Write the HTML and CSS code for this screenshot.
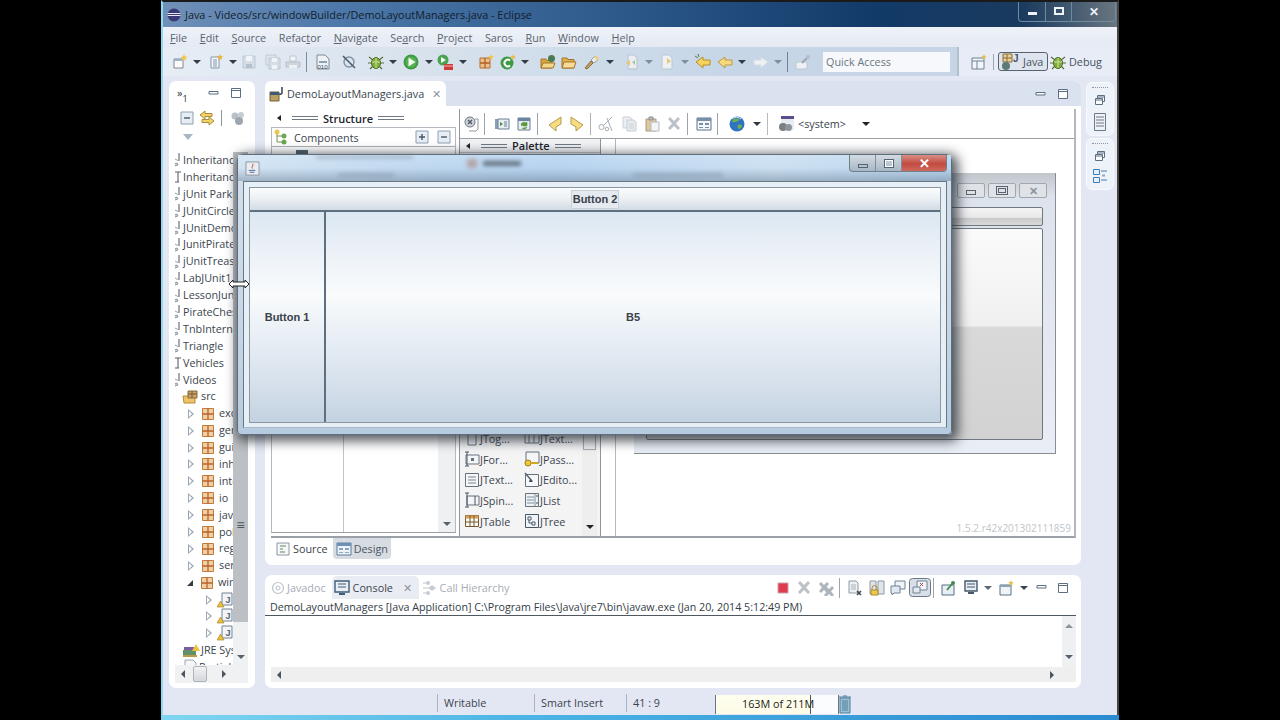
FILE: index.html
```html
<!DOCTYPE html>
<html lang="en">
<head>
    <meta charset="UTF-8">
    <title>Java - Videos/src/windowBuilder/DemoLayoutManagers.java - Eclipse</title>
    <link rel="stylesheet" href="styles.css">
</head>
<body>
    <svg class="defs" width="0" height="0">
        <defs>
            <symbol id="i-new" viewBox="0 0 16 16"><path d="M2 5h9v9H2z" fill="#fdfdf6" stroke="#7d8a99"/><path d="M2 5h9v2H2z" fill="#9fb4cc"/><path d="M12 0l1 2.5 2.500.5-2 1.500.5 2.500-2-1.500-2 1.500.5-2.500-2-1.500 2.500-.5z" fill="#f2c644"/></symbol>
            <symbol id="i-new2" viewBox="0 0 16 16"><path d="M3 3h8v11H3z" fill="#f6f8fb" stroke="#8495a8"/><path d="M5 6h4M5 8h4M5 10h4M5 12h4" stroke="#7c95ad"/><path d="M12 0l1 2 2 .5-1.500 1.500.5 2-2-1-2 1 .5-2L9 2.500l2-.5z" fill="#e2b83e"/></symbol>
            <symbol id="i-save" viewBox="0 0 16 16"><path d="M2 2h12v12H2z" fill="#d5dde6" stroke="#bcc8d4"/><path d="M5 2h6v5H5z" fill="#f2f5f8"/><path d="M5 10h6v4H5z" fill="#b3c0cd"/></symbol>
            <symbol id="i-saveall" viewBox="0 0 16 16"><path d="M1 1h10v10H1z" fill="#dfe5ec" stroke="#bec9d4"/><path d="M4 4h11v11H4z" fill="#d5dde6" stroke="#bcc8d4"/><path d="M7 4h5v4H7zM7 11h5v4H7z" fill="#f1f4f7"/></symbol>
            <symbol id="i-print" viewBox="0 0 16 16"><path d="M5 2h6v5H5z" fill="#f2f4f7" stroke="#bcc6d0"/><path d="M1 8h14v5H1z" fill="#cfd6de" stroke="#b6c0ca"/><path d="M4 11h8v3H4z" fill="#eef1f4"/></symbol>
            <symbol id="i-bin" viewBox="0 0 16 16"><path d="M2 1h8l4 4v10H2z" fill="#eef1f5" stroke="#7e8a96"/><path d="M4 7h8v2H4z" fill="#8ea2b6"/><text x="2.500" y="14.500" font-family="Liberation Sans" font-size="6" fill="#3e4a55">010</text></symbol>
            <symbol id="i-skip" viewBox="0 0 16 16"><path d="M3 8a5 5 0 1 0 10 0a5 5 0 1 0-10 0" fill="none" stroke="#7e90a2" stroke-width="1.400"/><path d="M2 2l12 12" stroke="#4a5c6e" stroke-width="1.600"/></symbol>
            <symbol id="i-debug" viewBox="0 0 16 16"><path d="M1 3l4 3M15 3l-4 3M0 9h4M16 9h-4M2 15l3-3M14 15l-3-3" stroke="#56683a" stroke-width="1.100"/><ellipse cx="8" cy="9" rx="4.500" ry="5.500" fill="#7fae3c" stroke="#4a6c24"/><path d="M8 4v10M4 8h8" stroke="#d0e39a"/></symbol>
            <symbol id="i-run" viewBox="0 0 16 16"><circle cx="8" cy="8" r="7.500" fill="#3f9a46"/><circle cx="8" cy="8" r="5.500" fill="#55b34f"/><path d="M5.500 3.500l7 4.500-7 4.500z" fill="#f4fbf2"/></symbol>
            <symbol id="i-ext" viewBox="0 0 16 16"><circle cx="6" cy="6" r="5.500" fill="#4aa350"/><path d="M4 3l5 3-5 3z" fill="#f4fbf2"/><path d="M7 10h9v6H7z" fill="#cc3c3a"/><path d="M7 12h9" stroke="#f2b0ae"/></symbol>
            <symbol id="i-pkg" viewBox="0 0 16 16"><path d="M2 4h10v10H2z" fill="#e9c08f" stroke="#b86f2c"/><path d="M7 4v10M2 9h10" stroke="#b45f22" stroke-width="1.300"/><path d="M13 0l.8 2 2 .5-1.600 1.200.4 2-1.600-1-1.600 1 .4-2L10.200 2.500l2-.5z" fill="#f2c644"/></symbol>
            <symbol id="i-class" viewBox="0 0 16 16"><circle cx="7" cy="9" r="6.500" fill="#3f9a46"/><path d="M10 6.500A3.300 3.300 0 1 0 10 11.500" fill="none" stroke="#fff" stroke-width="2"/><path d="M13 0l.8 2 2 .5-1.600 1.200.4 2-1.600-1-1.600 1 .4-2L10.200 2.500l2-.5z" fill="#e6c04a"/></symbol>
            <symbol id="i-open" viewBox="0 0 16 16"><path d="M1 5h5l1 1.500h5V14H1z" fill="#d8a53e" stroke="#a4762a"/><path d="M1 14l2-5h12l-2 5z" fill="#f4d68a" stroke="#a4762a"/><circle cx="11.500" cy="4.500" r="3.500" fill="#4c7a52"/></symbol>
            <symbol id="i-open2" viewBox="0 0 16 16"><path d="M1 4h5l1 1.500h6V14H1z" fill="#dcae4e" stroke="#a4762a"/><path d="M1 14l2-6h12l-2 6z" fill="#f6dc98" stroke="#a4762a"/></symbol>
            <symbol id="i-torch" viewBox="0 0 16 16"><path d="M1 14l2 1 6-6-2-2z" fill="#c89a5e" stroke="#8c6a3e"/><path d="M7 6l3 3 4-3-3-4z" fill="#e6e8ea" stroke="#98a2ac"/><path d="M11 2l3 4" stroke="#f3cd5e" stroke-width="2"/></symbol>
            <symbol id="i-nextann" viewBox="0 0 16 16"><path d="M4 1h6l3 3v11H4z" fill="#eaeef2" stroke="#b8c3ce"/><path d="M2 9l4-3v6z" fill="#e4c878"/><path d="M8 8l3-2v5z" fill="#a8c89a"/></symbol>
            <symbol id="i-prevann" viewBox="0 0 16 16"><path d="M3 1h7l3 3v11H3z" fill="#eef1f4" stroke="#bcc6d0"/><path d="M12 7l-4-3v6z" fill="#e4c878"/></symbol>
            <symbol id="i-backedit" viewBox="0 0 16 16"><path d="M1 8l7-5v3h7v5H8v3z" fill="#f6d35e" stroke="#b48e2a"/><path d="M0 2l3 2M3 0l1 3" stroke="#5a7a3a"/></symbol>
            <symbol id="i-back" viewBox="0 0 16 16"><path d="M1 8l7-5v3h7v5H8v3z" fill="#f6d97c" stroke="#b89a48"/></symbol>
            <symbol id="i-fwd" viewBox="0 0 16 16"><path d="M15 8L8 3v3H1v5h7v3z" fill="#eef1f4" stroke="#d2dae2"/></symbol>
            <symbol id="i-pin" viewBox="0 0 16 16"><path d="M1 8h11v7H1z" fill="#eef1f4" stroke="#bcc6d0"/><path d="M7 9l6-6" stroke="#9aa6b2" stroke-width="2"/><circle cx="13" cy="3" r="2" fill="#b6bfc8"/></symbol>
            <symbol id="i-arrow" viewBox="0 0 8 4"><path d="M0 0h8L4 4z"/></symbol>
            <symbol id="i-minview" viewBox="0 0 12 12"><path d="M1 4.500h9v2.500H1z" fill="#fff" stroke="#5d6f82"/></symbol>
            <symbol id="i-maxview" viewBox="0 0 12 12"><path d="M1.500 1.500h9v9h-9z" fill="#fff" stroke="#5d6f82"/><path d="M1.500 3.500h9" stroke="#5d6f82"/></symbol>
            <symbol id="i-collapse" viewBox="0 0 16 16"><path d="M2 2h12v12H2z" fill="#e7edf4" stroke="#8ea0b2"/><path d="M5 8h6" stroke="#46586a" stroke-width="1.400"/></symbol>
            <symbol id="i-expand" viewBox="0 0 16 16"><path d="M2 2h12v12H2z" fill="#e7edf4" stroke="#8ea0b2"/><path d="M5 8h6M8 5v6" stroke="#46586a" stroke-width="1.400"/></symbol>
            <symbol id="i-link" viewBox="0 0 16 16"><path d="M1 5l5-4v2.500h7V6.500H6V9z" fill="#f2d26a" stroke="#a88c3a"/><path d="M15 11l-5-4v2.500H3v3h7V15z" fill="#f2d26a" stroke="#a88c3a"/></symbol>
            <symbol id="i-filter" viewBox="0 0 16 16"><circle cx="5" cy="6" r="3.500" fill="#b8bfc6"/><circle cx="11" cy="5" r="3" fill="#c6ccd2"/><circle cx="9" cy="11" r="4" fill="#9ea7b0"/></symbol>
            <symbol id="i-comps" viewBox="0 0 16 16"><path d="M4 3v10h6M4 7h6" fill="none" stroke="#7c8c5c"/><circle cx="4" cy="3" r="2.500" fill="#e6c850"/><circle cx="11" cy="7" r="2.500" fill="#6aa84f"/><circle cx="11" cy="13" r="2.500" fill="#6aa84f"/></symbol>
            <symbol id="i-refactor" viewBox="0 0 16 16"><path d="M1 3h3v10H1z" fill="#8aa2b8"/><path d="M4 3h11v10H4z" fill="#e8eef4" stroke="#6a8094"/><path d="M6 6l3 2-3 2z" fill="#4f8a3c"/><path d="M10 6h3M10 8h3M10 10h3" stroke="#6a8094"/></symbol>
            <symbol id="i-sync" viewBox="0 0 16 16"><path d="M2 2h12v12H2z" fill="#e8eef4" stroke="#6a8094"/><path d="M2 2h12v3H2z" fill="#6b84a0"/><path d="M5 9a3 3 0 0 1 5-2l1-1v4H7l1-1a2 2 0 0 0-2 1zM11 11a3 3 0 0 1-5 1" fill="#5a9a3c" stroke="#5a9a3c" stroke-width=".6"/></symbol>
            <symbol id="i-test" viewBox="0 0 16 16"><circle cx="6" cy="6" r="5" fill="#cfd4d9" stroke="#6c7680"/><path d="M4 4l4 4M8 4l-4 4" stroke="#4e5862" stroke-width="1.300"/><path d="M11 3h3v10l-2 2H5" fill="none" stroke="#8e98a2"/></symbol>
            <symbol id="i-undo" viewBox="0 0 16 16"><path d="M14 1L2 9l7 6v-4l5-3z" fill="#f6dc82" stroke="#b49a4c"/></symbol>
            <symbol id="i-redo" viewBox="0 0 16 16"><path d="M2 1l12 8-7 6v-4L2 8z" fill="#f6dc82" stroke="#b49a4c"/></symbol>
            <symbol id="i-cut" viewBox="0 0 16 16"><path d="M14 1L5 10M9 2l5 13" stroke="#a8b0b8" fill="none"/><circle cx="3.500" cy="11" r="2.500" fill="none" stroke="#a8b0b8"/><circle cx="9" cy="13" r="1.800" fill="none" stroke="#a8b0b8"/></symbol>
            <symbol id="i-copy" viewBox="0 0 16 16"><path d="M2 1h7l2 2v9H2z" fill="#eceff2" stroke="#cdd3d9"/><path d="M6 4h7l2 2v9H6z" fill="#e8ebee" stroke="#c7ced4"/><path d="M8 8h5M8 10h5M8 12h5" stroke="#ccd2d8"/></symbol>
            <symbol id="i-paste" viewBox="0 0 16 16"><path d="M2 3h10v12H2z" fill="#dcc7a0" stroke="#ad9a78"/><path d="M5 1h4v3H5z" fill="#b9bec4" stroke="#8a9097"/><path d="M7 6h8v9H7z" fill="#f2f4f6" stroke="#b6bcc2"/></symbol>
            <symbol id="i-del" viewBox="0 0 16 16"><path d="M2 3l2-2 4 4 4-4 2 2-4 4.500 4 4.500-2 2-4-4-4 4-2-2 4-4.500z" fill="#bcc2c8"/></symbol>
            <symbol id="i-form" viewBox="0 0 16 16"><path d="M1 2h14v12H1z" fill="#f4f6f9" stroke="#5a7288"/><path d="M1 2h14v3H1z" fill="#7490ac"/><path d="M3 7h4v2H3zM9 7h4v2H9zM3 11h4v1H3zM9 11h4v1H9z" fill="#7490ac"/></symbol>
            <symbol id="i-globe" viewBox="0 0 16 16"><circle cx="8" cy="8" r="7.500" fill="#2f74c0"/><path d="M3 5c2-3 5-3 7-2 1 1-2 3-4 3S3 7 3 5zM9 9c2-1 4 0 4 1s-2 3-3 3-2-3-1-4z" fill="#6fb04e"/><path d="M3 3a7 7 0 0 1 9 0" stroke="#cfe4f6" fill="none"/></symbol>
            <symbol id="i-lnf" viewBox="0 0 16 16"><path d="M3 0h13v3H3z" fill="#5a4f8c"/><path d="M3 3h13v11H3z" fill="#e8ecf0"/><circle cx="5" cy="11" r="4" fill="#787e84"/><circle cx="10.500" cy="11.500" r="3.500" fill="#8e949a"/></symbol>
            <symbol id="i-tree-j" viewBox="0 0 12 16"><path d="M7 1v8" stroke="#59636d" stroke-width="1.100"/><path d="M3 7l3 1.500M2 12l3-1 1 2-3 1z" fill="#c9ccd0" stroke="#7e8892" stroke-width=".8"/></symbol>
            <symbol id="i-tree-v" viewBox="0 0 12 16"><path d="M3 3h6M6 3v10M3 13h4" stroke="#59636d" stroke-width="1.100" fill="none"/></symbol>
            <symbol id="i-tree-src" viewBox="0 0 18 16"><path d="M1 7h9l3 1v6H2z" fill="#eec36c" stroke="#b68a34"/><path d="M6 2h9v7H6z" fill="#c6a26c" stroke="#8a6a3c"/><path d="M10 2v7M6 5h9" stroke="#7a5a30"/></symbol>
            <symbol id="i-tree-pkg" viewBox="0 0 14 14"><path d="M1.500 1.500h11v11h-11z" fill="#f0cfa4" stroke="#bf7a3c"/><path d="M7 1.500v11M1.500 7h11" stroke="#b8642a" stroke-width="1.300"/></symbol>
            <symbol id="i-tree-warn" viewBox="0 0 16 16"><path d="M5 1h10v12H5z" fill="#f2f4f7" stroke="#6e8296"/><text x="8.500" y="10.500" font-family="Liberation Sans" font-size="9" font-weight="bold" fill="#55616d">J</text><path d="M3.500 9l3.500 6H0z" fill="#eec13c" stroke="#9b7c1e" stroke-width=".6"/></symbol>
            <symbol id="i-jre" viewBox="0 0 18 16"><path d="M1 8h13v5H1z" fill="#62906a"/><path d="M2 5h10v3H2z" fill="#7a5e9e"/><path d="M1 13h14v2H1z" fill="#bc9a4a"/><path d="M14 2l4 7h-8z" fill="#eec13c"/></symbol>
            <symbol id="i-doc" viewBox="0 0 16 16"><path d="M3 1h8l3 3v11H3z" fill="#f6f6f6" stroke="#9aa4ae"/></symbol>
            <symbol id="i-cursor" viewBox="0 0 22 10"><path d="M1 5l4-4v2h12V1l4 4-4 4V7H5v2z" fill="#fff" stroke="#222" stroke-width="1"/></symbol>
            <symbol id="i-src" viewBox="0 0 16 16"><path d="M2 2h12v12H2z" fill="#f5f7f9" stroke="#8d98a3"/><path d="M5 5h6M5 8h3M5 11h5" stroke="#5c8a60"/></symbol>
            <symbol id="i-des" viewBox="0 0 16 16"><path d="M1 2h14v12H1z" fill="#eef3f8" stroke="#5a7a9c"/><path d="M1 2h14v3H1z" fill="#6d90b6"/><path d="M3 7h4v2H3zM9 7h4v2H9zM3 11h4v1H3zM9 11h4v1H9z" fill="#8aa6c4"/></symbol>
            <symbol id="i-at" viewBox="0 0 14 14"><circle cx="7" cy="7" r="5.500" fill="none" stroke="#bcc4cc" stroke-width="1.200"/><circle cx="7" cy="7" r="2" fill="none" stroke="#bcc4cc"/></symbol>
            <symbol id="i-console" viewBox="0 0 16 16"><path d="M1 1h14v11H1z" fill="#e8eef4" stroke="#3f5c78" stroke-width="1.400"/><path d="M4 4h8M4 7h8" stroke="#3f5c78"/><path d="M5 14h6" stroke="#3f5c78" stroke-width="2"/></symbol>
            <symbol id="i-hier" viewBox="0 0 16 16"><path d="M2 3h4M2 8h13M2 13h4" stroke="#bcc4cc"/><circle cx="7" cy="3" r="2" fill="#c6ccd2"/><circle cx="11" cy="8" r="2.500" fill="#c6ccd2"/><circle cx="7" cy="13" r="2" fill="#c6ccd2"/></symbol>
            <symbol id="i-stop" viewBox="0 0 12 12"><path d="M1 1h10v10H1z" fill="#df3c50" stroke="#c9a0a8"/></symbol>
            <symbol id="i-delall" viewBox="0 0 16 16"><path d="M1 4l2-2 3 3 3-3 2 2-3 3.500 3 3.500-2 2-3-3-3 3-2-2 3-3.500z" fill="#aeb5bc"/><path d="M6 8l2-2 3 3 3-3 2 2-3 3.500 3 3.500-2 2-3-3-3 3-2-2 3-3.500z" fill="#aeb5bc"/></symbol>
            <symbol id="i-clear" viewBox="0 0 16 16"><path d="M2 1h7l2 2v10H2z" fill="#eef1f4" stroke="#8e98a2"/><path d="M4 5h5M4 7h5M4 9h5" stroke="#aab2ba"/><path d="M10 11l4 4M14 11l-4 4" stroke="#3e4a56" stroke-width="1.600"/></symbol>
            <symbol id="i-lock" viewBox="0 0 16 16"><path d="M1 1h6v13H1zM9 1h6v13H9z" fill="#dfe5ea" stroke="#8e98a2"/><path d="M3 11V8a2.500 2.500 0 0 1 5 0v3" fill="none" stroke="#a98a2e"/><path d="M2 10h7v5H2z" fill="#f0c84c" stroke="#a98a2e"/></symbol>
            <symbol id="i-out" viewBox="0 0 16 16"><path d="M5 1h10v8H5z" fill="#f1f4f7" stroke="#6e8296"/><path d="M1 6h9v7H4l-2 2v-2H1z" fill="#e3e9ef" stroke="#6e8296"/></symbol>
            <symbol id="i-err" viewBox="0 0 16 16"><path d="M5 1h10v9H5z" fill="#f1f4f7" stroke="#6e8296"/><path d="M8 3l3 3M11 3L8 6" stroke="#b04a4a"/><path d="M1 7h7v6H1z" fill="#e3e9ef" stroke="#6e8296"/></symbol>
            <symbol id="i-pinc" viewBox="0 0 16 16"><path d="M1 5h12v10H1z" fill="#e8eef4" stroke="#557088"/><path d="M6 10l5-6" stroke="#3f8a4c" stroke-width="1.800"/><circle cx="12" cy="3" r="2" fill="#3f8a4c"/></symbol>
            <symbol id="i-disp" viewBox="0 0 16 16"><path d="M2 1h12v10H2z" fill="#e8eef4" stroke="#43586c" stroke-width="1.400"/><path d="M4 4h8M4 7h8" stroke="#43586c"/><path d="M5 13h6" stroke="#43586c" stroke-width="2"/></symbol>
            <symbol id="i-newc" viewBox="0 0 16 16"><path d="M1 5h11v10H1z" fill="#f2f5f8" stroke="#557088"/><path d="M1 5h11v2H1z" fill="#8aa2b8"/><path d="M12 0l.8 2 2 .5-1.600 1.200.4 2-1.600-1-1.600 1 .4-2L9.200 2.500l2-.5z" fill="#e6c04a"/></symbol>
            <symbol id="i-restore" viewBox="0 0 12 12"><path d="M3.500 1.500h7v6h-7z" fill="#fff" stroke="#5d6f82"/><path d="M1.500 4.500h7v6h-7z" fill="#fff" stroke="#5d6f82"/><path d="M1.500 6h7M3.500 3h7" stroke="#5d6f82"/></symbol>
            <symbol id="i-list" viewBox="0 0 14 20"><path d="M1.500 1.500h11v17h-11z" fill="#eff2f5" stroke="#6a7a8a"/><path d="M3 5h8M3 8h8M3 11h8M3 14h8" stroke="#6a7a8a"/></symbol>
            <symbol id="i-outline" viewBox="0 0 16 16"><path d="M1.500 1.500h6v5h-6zM1.500 9.500h6v5h-6z" fill="#e8f1fa" stroke="#3e7cb4"/><path d="M9 3h6M9 12h6" stroke="#3e7cb4"/><path d="M10 7.500h3" stroke="#9aa6b2" stroke-width="2"/></symbol>
            <symbol id="i-gc" viewBox="0 0 14 20"><path d="M2 4h10v15H2z" fill="#9cc0d6" stroke="#4d7e9c"/><path d="M1 3h12M5 2h4M5 6v11M7 6v11M9 6v11" stroke="#4d7e9c"/></symbol>
            <symbol id="i-javapersp" viewBox="0 0 20 18"><path d="M3 1h9v8H3z" fill="#e6d09c" stroke="#8a6d3a"/><path d="M7 1v8M3 5h9" stroke="#8a6d3a"/><text x="13" y="9" font-family="Liberation Sans" font-size="10" font-weight="bold" fill="#48545f">J</text><circle cx="6" cy="13" r="4" fill="#5c7a78"/></symbol>
            <symbol id="i-persp" viewBox="0 0 16 16"><path d="M1 4h12v11H1z" fill="#f2f5f8" stroke="#6e8296"/><path d="M1 7h12M6 7v8" stroke="#6e8296"/><path d="M13 0l.7 1.800 1.800.4-1.400 1.200.3 1.800-1.400-.9-1.400.9.300-1.800-1.400-1.200 1.800-.4z" fill="#e6c04a"/></symbol>
            <symbol id="i-pal-tog" viewBox="0 0 16 16"><path d="M4 1h8v14H4z" fill="#f4f5f7" stroke="#66727e"/></symbol>
            <symbol id="i-pal-text" viewBox="0 0 16 16"><path d="M1 3h14v10H1z" fill="#f4f5f7" stroke="#66727e"/><path d="M5 3v10M10 3v10" stroke="#66727e"/></symbol>
            <symbol id="i-pal-for" viewBox="0 0 16 16"><path d="M2 4h13v9H2z" fill="#f4f5f7" stroke="#66727e"/><path d="M1 1h4M3 1v14M1 15h4" stroke="#4a5662" fill="none"/><path d="M7 7h3v3H7z" fill="#59738c"/></symbol>
            <symbol id="i-pal-pass" viewBox="0 0 16 16"><path d="M2 1h13v11H2z" fill="#f4f5f7" stroke="#66727e"/><circle cx="4" cy="12" r="3" fill="#f0c932" stroke="#9b7c1e"/><path d="M6 12h8" stroke="#d0a828" stroke-width="2"/></symbol>
            <symbol id="i-pal-area" viewBox="0 0 16 16"><path d="M1.500 1.500h13v13h-13z" fill="#f6f7f9" stroke="#66727e"/><path d="M4 5h8M4 8h8M4 11h8" stroke="#77838e"/></symbol>
            <symbol id="i-pal-edit" viewBox="0 0 16 16"><path d="M1.500 2.500h13v12h-13z" fill="#f6f7f9" stroke="#66727e"/><path d="M1 1l7 8" stroke="#5a6672" stroke-width="1.500"/><path d="M6 7l3 3-4 0z" fill="#3a4652"/></symbol>
            <symbol id="i-pal-spin" viewBox="0 0 16 16"><path d="M3 4h12v9H3z" fill="#f4f5f7" stroke="#66727e"/><path d="M1 1h4M3 1v14M1 15h4M11 4v9" stroke="#4a5662" fill="none"/></symbol>
            <symbol id="i-pal-list" viewBox="0 0 16 16"><path d="M1.500 1.500h13v13h-13z" fill="#eef2f6" stroke="#66727e"/><path d="M3 5h7M3 8h7M3 11h7M11 2v12" stroke="#7f90a1"/><path d="M12 4h2M12 11h2" stroke="#44515e"/></symbol>
            <symbol id="i-pal-table" viewBox="0 0 16 16"><path d="M1.500 2.500h13v11h-13z" fill="#fbfbf6" stroke="#77582e"/><path d="M1.500 2.500h13v3h-13z" fill="#d8a052"/><path d="M6 3v10M10 3v10M2 9h12" stroke="#77582e"/></symbol>
            <symbol id="i-pal-tree" viewBox="0 0 16 16"><path d="M1.500 1.500h13v13h-13z" fill="#f0f4f7" stroke="#46586a"/><path d="M4 4h3v3H4zM8 9h3v3H8z" fill="#fff" stroke="#46586a"/><path d="M5 7v3h3" stroke="#46586a" fill="none"/></symbol>
        </defs>
    </svg>

    <div class="window">
        <div class="titlebar">
            <svg class="title-icon" width="16" height="16" viewBox="0 0 16 16"><circle cx="8" cy="8" r="6.500" fill="#3a3a76"/><path d="M1.500 6.500h13M1.500 8.500h13" stroke="#e8e8f4"/></svg>
            <span class="title-text">Java - Videos/src/windowBuilder/DemoLayoutManagers.java - Eclipse</span>
            <div class="caption">
                <span class="cap-btn cap-min"><i></i></span>
                <span class="cap-btn cap-max"><i></i></span>
                <span class="cap-btn cap-close">✕</span>
            </div>
        </div>

        <div class="menubar">
            <span><u>F</u>ile</span><span><u>E</u>dit</span><span><u>S</u>ource</span><span>Refac<u>t</u>or</span><span><u>N</u>avigate</span><span>Se<u>a</u>rch</span><span><u>P</u>roject</span><span>Saros</span><span><u>R</u>un</span><span><u>W</u>indow</span><span><u>H</u>elp</span>
        </div>

        <div class="toolbar">
            <svg class="tool-strip" width="650" height="29" viewBox="161 47 650 29" fill="#333d47">
                <use href="#i-new" x="172" y="54" width="16" height="16"/>
                <use href="#i-arrow" x="193" y="60" width="8" height="4"/>
                <use href="#i-new2" x="208" y="54" width="16" height="16"/>
                <use href="#i-arrow" x="229" y="60" width="8" height="4"/>
                <use href="#i-save" x="241" y="54" width="16" height="16"/>
                <use href="#i-saveall" x="265" y="54" width="16" height="16"/>
                <use href="#i-print" x="285" y="54" width="16" height="16"/>
                <path d="M306.500 52v20" stroke="#7e8d9c"/>
                <use href="#i-bin" x="315" y="54" width="16" height="16"/>
                <use href="#i-skip" x="341" y="54" width="16" height="16"/>
                <use href="#i-debug" x="368" y="54" width="16" height="16"/>
                <use href="#i-arrow" x="389" y="60" width="8" height="4"/>
                <use href="#i-run" x="403" y="54" width="16" height="16"/>
                <use href="#i-arrow" x="425" y="60" width="8" height="4"/>
                <use href="#i-ext" x="437" y="54" width="16" height="16"/>
                <use href="#i-arrow" x="459" y="60" width="8" height="4"/>
                <use href="#i-pkg" x="478" y="54" width="16" height="16"/>
                <use href="#i-class" x="500" y="54" width="16" height="16"/>
                <use href="#i-arrow" x="521" y="60" width="8" height="4"/>
                <use href="#i-open" x="540" y="54" width="16" height="16"/>
                <use href="#i-open2" x="561" y="54" width="16" height="16"/>
                <use href="#i-torch" x="584" y="54" width="16" height="16"/>
                <use href="#i-arrow" x="606" y="60" width="8" height="4"/>
                <use href="#i-nextann" x="624" y="54" width="16" height="16"/>
                <use href="#i-arrow" x="645" y="60" width="8" height="4" fill="#7c8ea2"/>
                <use href="#i-prevann" x="659" y="54" width="16" height="16"/>
                <use href="#i-arrow" x="681" y="60" width="8" height="4" fill="#7c8ea2"/>
                <use href="#i-backedit" x="695" y="54" width="16" height="16"/>
                <use href="#i-back" x="717" y="54" width="16" height="16"/>
                <use href="#i-arrow" x="738" y="60" width="8" height="4"/>
                <use href="#i-fwd" x="753" y="54" width="16" height="16"/>
                <use href="#i-arrow" x="774" y="60" width="8" height="4" fill="#7c8ea2"/>
                <path d="M787.500 52v20" stroke="#6f8092"/>
                <use href="#i-pin" x="795" y="54" width="16" height="16"/>
            </svg>
            <div class="quick-access">Quick Access</div>
            <div class="persp">
                <svg width="16" height="16"><use href="#i-persp"/></svg>
                <span class="persp-sep"></span>
                <span class="persp-btn active"><svg width="20" height="18"><use href="#i-javapersp"/></svg>Java</span>
                <span class="persp-btn"><svg width="16" height="16"><use href="#i-debug"/></svg>Debug</span>
            </div>
        </div>

        <div class="workbench">
            <aside class="explorer">
                <div class="explorer-tools">
                    <span class="overflow">»<sub>1</sub></span>
                    <svg width="12" height="12"><use href="#i-minview"/></svg>
                    <svg width="12" height="12"><use href="#i-maxview"/></svg>
                </div>
                <div class="explorer-actions">
                    <svg width="16" height="16"><use href="#i-collapse"/></svg>
                    <svg width="16" height="16"><use href="#i-link"/></svg>
                    <span class="vsep"></span>
                    <svg width="16" height="16"><use href="#i-filter"/></svg>
                </div>
                <div class="explorer-menu"><span class="down-tri"></span></div>
                <div class="explorer-body">
                    <ul class="tree">
                        <li><svg width="12" height="16"><use href="#i-tree-j"/></svg>InheritanceDemo</li>
                        <li><svg width="12" height="16"><use href="#i-tree-v"/></svg>InheritanceTest</li>
                        <li><svg width="12" height="16"><use href="#i-tree-j"/></svg>jUnit Parking</li>
                        <li><svg width="12" height="16"><use href="#i-tree-j"/></svg>JUnitCircleTest</li>
                        <li><svg width="12" height="16"><use href="#i-tree-j"/></svg>JUnitDemo</li>
                        <li><svg width="12" height="16"><use href="#i-tree-j"/></svg>JunitPirate</li>
                        <li><svg width="12" height="16"><use href="#i-tree-j"/></svg>jUnitTreasure</li>
                        <li><svg width="12" height="16"><use href="#i-tree-j"/></svg>LabJUnit1</li>
                        <li><svg width="12" height="16"><use href="#i-tree-j"/></svg>LessonJunit</li>
                        <li><svg width="12" height="16"><use href="#i-tree-j"/></svg>PirateChest</li>
                        <li><svg width="12" height="16"><use href="#i-tree-j"/></svg>TnbInternal</li>
                        <li><svg width="12" height="16"><use href="#i-tree-j"/></svg>Triangle</li>
                        <li><svg width="12" height="16"><use href="#i-tree-v"/></svg>Vehicles</li>
                        <li><svg width="12" height="16"><use href="#i-tree-j"/></svg>Videos</li>
                        <li class="lvl-src"><svg width="18" height="16"><use href="#i-tree-src"/></svg>src</li>
                        <li class="lvl-pkg"><span class="closed"></span><svg width="14" height="14"><use href="#i-tree-pkg"/></svg>exceptions</li>
                        <li class="lvl-pkg"><span class="closed"></span><svg width="14" height="14"><use href="#i-tree-pkg"/></svg>generics</li>
                        <li class="lvl-pkg"><span class="closed"></span><svg width="14" height="14"><use href="#i-tree-pkg"/></svg>gui</li>
                        <li class="lvl-pkg"><span class="closed"></span><svg width="14" height="14"><use href="#i-tree-pkg"/></svg>inheritance</li>
                        <li class="lvl-pkg"><span class="closed"></span><svg width="14" height="14"><use href="#i-tree-pkg"/></svg>interfaces</li>
                        <li class="lvl-pkg"><span class="closed"></span><svg width="14" height="14"><use href="#i-tree-pkg"/></svg>io</li>
                        <li class="lvl-pkg"><span class="closed"></span><svg width="14" height="14"><use href="#i-tree-pkg"/></svg>javafx</li>
                        <li class="lvl-pkg"><span class="closed"></span><svg width="14" height="14"><use href="#i-tree-pkg"/></svg>polymorph</li>
                        <li class="lvl-pkg"><span class="closed"></span><svg width="14" height="14"><use href="#i-tree-pkg"/></svg>regex</li>
                        <li class="lvl-pkg"><span class="closed"></span><svg width="14" height="14"><use href="#i-tree-pkg"/></svg>serial</li>
                        <li class="lvl-pkg lvl-open"><span class="open"></span><svg width="14" height="14"><use href="#i-tree-pkg"/></svg>windowBuilder</li>
                        <li class="lvl-file"><span class="closed"></span><svg width="16" height="16"><use href="#i-tree-warn"/></svg></li>
                        <li class="lvl-file"><span class="closed"></span><svg width="16" height="16"><use href="#i-tree-warn"/></svg></li>
                        <li class="lvl-file"><span class="closed"></span><svg width="16" height="16"><use href="#i-tree-warn"/></svg></li>
                        <li class="lvl-src"><svg width="18" height="16"><use href="#i-jre"/></svg>JRE System</li>
                        <li class="lvl-src"><svg width="16" height="16"><use href="#i-doc"/></svg>Partial</li>
                    </ul>
                    <div class="tree-vscroll">
                        <div class="tree-track"><span class="grip">≡</span></div>
                        <span class="down-small"></span>
                    </div>
                </div>
                <div class="tree-hscroll"><span class="left-small"></span><span class="thumb"></span><span class="right-small"></span></div>
            </aside>

            <div class="center">
                <section class="editor">
                    <div class="editor-tabs">
                        <div class="tab">
                            <svg width="16" height="16" viewBox="0 0 16 16"><path d="M1 6h9v9H1z" fill="#b8a060" stroke="#76603a"/><path d="M1 6h9v3H1z" fill="#3e5a78"/><path d="M13 1v6a2 2 0 0 1-3 1" fill="none" stroke="#33404c" stroke-width="1.500"/></svg>
                            DemoLayoutManagers.java
                            <span class="tab-close">✕</span>
                        </div>
                        <div class="view-tools">
                            <svg width="12" height="12"><use href="#i-minview"/></svg>
                            <svg width="12" height="12"><use href="#i-maxview"/></svg>
                        </div>
                    </div>
                    <div class="designer">
                        <div class="structure">
                            <div class="flyout-head"><span class="left-tri"></span><span class="lines"></span><b>Structure</b><span class="lines"></span></div>
                            <div class="comp-box">
                                <div class="comp-head"><svg width="16" height="16"><use href="#i-comps"/></svg><span>Components</span><svg width="16" height="16"><use href="#i-expand"/></svg><svg width="16" height="16"><use href="#i-collapse"/></svg></div>
                                <div class="comp-tree"><span class="comp-root"></span></div>
                                <div class="prop-grid"><div class="prop-cols"><i></i></div><div class="prop-scroll"><span class="down-small"></span></div></div>
                            </div>
                        </div>
                        <div class="design-main">
                            <div class="design-tools">
                                <svg width="334" height="24" viewBox="0 0 334 24" fill="#2e3842">
                                    <use href="#i-test" x="3" y="4" width="16" height="16"/>
                                    <path d="M23.500 1v22" stroke="#9aa5b0"/>
                                    <use href="#i-refactor" x="33" y="4" width="16" height="16"/>
                                    <use href="#i-sync" x="55" y="4" width="16" height="16"/>
                                    <path d="M76.500 1v22" stroke="#9aa5b0"/>
                                    <use href="#i-undo" x="86" y="4" width="16" height="16"/>
                                    <use href="#i-redo" x="108" y="4" width="16" height="16"/>
                                    <path d="M129.500 1v22" stroke="#aab3bc"/>
                                    <use href="#i-cut" x="137" y="4" width="16" height="16"/>
                                    <use href="#i-copy" x="160" y="4" width="16" height="16"/>
                                    <use href="#i-paste" x="183" y="4" width="16" height="16"/>
                                    <use href="#i-del" x="205" y="4" width="16" height="16"/>
                                    <path d="M226.500 1v22" stroke="#9aa5b0"/>
                                    <use href="#i-form" x="235" y="4" width="16" height="16"/>
                                    <path d="M256.500 1v22" stroke="#9aa5b0"/>
                                    <use href="#i-globe" x="268" y="4" width="16" height="16"/>
                                    <use href="#i-arrow" x="292" y="10" width="8" height="4"/>
                                    <path d="M306.500 1v22" stroke="#b2bac2"/>
                                    <use href="#i-lnf" x="317" y="4" width="16" height="16"/>
                                </svg>
                                <span class="lnf">&lt;system&gt;</span>
                                <span class="down-solid"></span>
                            </div>
                            <div class="design-row">
                                <div class="palette">
                                    <div class="flyout-head palette-head"><span class="left-tri"></span><span class="lines"></span><b>Palette</b><span class="lines"></span></div>
                                    <div class="palette-body">
                                        <div class="palette-items">
                                            <span class="pal"><svg width="16" height="16"><use href="#i-pal-tog"/></svg>JTog...</span>
                                            <span class="pal"><svg width="16" height="16"><use href="#i-pal-text"/></svg>JText...</span>
                                            <span class="pal"><svg width="16" height="16"><use href="#i-pal-for"/></svg>JFor...</span>
                                            <span class="pal"><svg width="16" height="16"><use href="#i-pal-pass"/></svg>JPass...</span>
                                            <span class="pal"><svg width="16" height="16"><use href="#i-pal-area"/></svg>JText...</span>
                                            <span class="pal"><svg width="16" height="16"><use href="#i-pal-edit"/></svg>JEdito...</span>
                                            <span class="pal"><svg width="16" height="16"><use href="#i-pal-spin"/></svg>JSpin...</span>
                                            <span class="pal"><svg width="16" height="16"><use href="#i-pal-list"/></svg>JList</span>
                                            <span class="pal"><svg width="16" height="16"><use href="#i-pal-table"/></svg>JTable</span>
                                            <span class="pal"><svg width="16" height="16"><use href="#i-pal-tree"/></svg>JTree</span>
                                        </div>
                                        <div class="pal-scroll"><span class="pal-thumb"></span><span class="down-solid small"></span></div>
                                    </div>
                                </div>
                                <div class="canvas-gutter"></div>
                                <div class="canvas">
                                    <div class="frame">
                                        <div class="frame-title">
                                            <span class="frame-btn"><i></i></span>
                                            <span class="frame-btn square"><i></i></span>
                                            <span class="frame-btn x">✕</span>
                                        </div>
                                        <div class="frame-top"></div>
                                        <div class="frame-mid"></div>
                                    </div>
                                    <div class="version">1.5.2.r42x201302111859</div>
                                </div>
                            </div>
                        </div>
                    </div>
                    <div class="editor-foot">
                        <span class="foot-tab"><svg width="16" height="16"><use href="#i-src"/></svg>Source</span>
                        <span class="foot-tab current"><svg width="16" height="16"><use href="#i-des"/></svg>Design</span>
                    </div>
                </section>

                <section class="console">
                    <div class="console-tabs">
                        <span class="ctab dim"><svg width="14" height="14"><use href="#i-at"/></svg>Javadoc</span>
                        <span class="ctab current"><svg width="16" height="16"><use href="#i-console"/></svg>Console<span class="tab-close">✕</span></span>
                        <span class="ctab dim"><svg width="16" height="16"><use href="#i-hier"/></svg>Call Hierarchy</span>
                        <svg class="console-strip" width="300" height="22" viewBox="0 0 300 22" fill="#3a4550">
                            <use href="#i-stop" x="29" y="5" width="12" height="12"/>
                            <use href="#i-del" x="48" y="3" width="16" height="16"/>
                            <use href="#i-delall" x="70" y="3" width="16" height="16"/>
                            <path d="M91.500 1v20" stroke="#9aa5b0"/>
                            <use href="#i-clear" x="99" y="3" width="16" height="16"/>
                            <use href="#i-lock" x="121" y="3" width="16" height="16"/>
                            <use href="#i-out" x="142" y="3" width="16" height="16"/>
                            <rect x="161.500" y="1.500" width="21" height="18" rx="3" fill="#d9dfe6" stroke="#6d7884"/>
                            <use href="#i-err" x="164" y="3" width="16" height="16"/>
                            <path d="M185.500 1v20" stroke="#9aa5b0"/>
                            <use href="#i-pinc" x="193" y="3" width="16" height="16"/>
                            <use href="#i-disp" x="215" y="3" width="16" height="16"/>
                            <use href="#i-arrow" x="236" y="9" width="8" height="4" fill="#5d6a76"/>
                            <use href="#i-newc" x="251" y="3" width="16" height="16"/>
                            <use href="#i-arrow" x="272" y="9" width="8" height="4"/>
                            <use href="#i-minview" x="288" y="4" width="12" height="12"/>
                        </svg>
                        <svg class="console-max" width="12" height="12"><use href="#i-maxview"/></svg>
                    </div>
                    <div class="console-label">DemoLayoutManagers [Java Application] C:\Program Files\Java\jre7\bin\javaw.exe (Jan 20, 2014 5:12:49 PM)</div>
                    <div class="console-out">
                        <div class="console-text"></div>
                        <div class="console-vscroll"><span class="up-small"></span><span class="down-small"></span></div>
                    </div>
                    <div class="console-hscroll"><span class="left-small"></span><span class="right-small"></span></div>
                </section>
            </div>

            <aside class="trim">
                <div class="trim-group first">
                    <span class="trim-dots"></span>
                    <svg width="12" height="12"><use href="#i-restore"/></svg>
                    <svg width="14" height="20"><use href="#i-list"/></svg>
                </div>
                <div class="trim-group">
                    <span class="trim-dots"></span>
                    <svg width="12" height="12"><use href="#i-restore"/></svg>
                    <svg width="16" height="16"><use href="#i-outline"/></svg>
                </div>
            </aside>
        </div>

        <div class="statusbar">
            <span class="st-cell writable">Writable</span>
            <span class="st-cell insert">Smart Insert</span>
            <span class="st-cell pos">41 : 9</span>
            <span class="heap"><span class="heap-used"></span><span class="heap-text">163M of 211M</span></span>
            <svg class="gc" width="14" height="20"><use href="#i-gc"/></svg>
        </div>
        <div class="window-foot"></div>
    </div>

    <!-- running swing app, floats over the workbench -->
    <div class="app-frame">
        <div class="app-title">
            <svg width="15" height="15" viewBox="0 0 16 16"><path d="M1 1h14v14H1z" fill="#e9edf2" stroke="#8a96a2"/><path d="M8 3c2 2-2 3 0 5" fill="none" stroke="#c04a38"/><path d="M4 10h7M5 12h5" stroke="#4a6a9a"/></svg>
            <span class="blur-a"></span><span class="blur-b"></span><span class="blur-c"></span><span class="blur-d"></span><span class="blur-e"></span>
            <div class="app-caption">
                <span class="ac-btn"><i></i></span>
                <span class="ac-btn square"><i></i></span>
                <span class="ac-btn close">✕</span>
            </div>
        </div>
        <div class="app-content">
            <div class="app-inner">
                <div class="app-north"><span class="focus-label">Button 2</span></div>
                <div class="app-row">
                    <div class="app-west">Button 1</div>
                    <div class="app-center">B5</div>
                </div>
            </div>
        </div>
    </div>
    <svg class="resize-cursor" width="22" height="10"><use href="#i-cursor"/></svg>
</body>
</html>
```

FILE: styles.css
```css
* {
    margin: 0;
    padding: 0;
    box-sizing: border-box;
}

body {
    width: 1280px;
    height: 720px;
    background: #000;
    overflow: hidden;
    position: relative;
    font-family: 'Open Sans', 'Noto Sans', sans-serif;
    font-size: 10.8px;
    color: #3a444e;
}

svg {
    display: block;
    flex: none;
}

.defs {
    position: absolute;
}

ul {
    list-style: none;
}

.window {
    width: 958px;
    height: 720px;
    margin-left: 161px;
    display: flex;
    flex-direction: column;
    background: #e3e7f4;
    border-left: 2px solid #8fdcf2;
    border-right: 2px solid #444;
    border-top: 2px solid #1a1a1a;
}

/* title */
.titlebar {
    height: 25px;
    flex: none;
    display: flex;
    align-items: center;
    padding-left: 3px;
    background: linear-gradient(90deg, #6f90b8 0%, #4a76a8 20%, #2a5688 50%, #123a68 75%, #1a3a5e 90%, #6a7680 100%);
    color: #14202c;
    font-size: 10.85px;
}

.title-text {
    margin-left: 3px;
}

.caption {
    margin-left: auto;
    margin-right: 1px;
    margin-top: -6px;
    display: flex;
    height: 20px;
    border: 1px solid #6d8aa3;
    border-top: 0;
    border-radius: 0 0 4px 4px;
}

.cap-btn {
    width: 26px;
    display: flex;
    align-items: center;
    justify-content: center;
    color: #eef3f8;
    border-left: 1px solid #6d8aa3;
}

.cap-min {
    border-left: 0;
}

.cap-min i {
    width: 9px;
    height: 3px;
    margin-top: 5px;
    background: #eef3f8;
}

.cap-max i {
    width: 10px;
    height: 8px;
    border: 2px solid #eef3f8;
}

.cap-close {
    width: 44px;
    font-weight: bold;
    font-size: 12px;
}

/* menu + toolbar */
.menubar {
    height: 20px;
    flex: none;
    display: flex;
    align-items: center;
    padding-left: 7px;
    gap: 12.6px;
    background: linear-gradient(180deg, #eef2f8, #e4e9f3);
    color: #59646f;
}

.toolbar {
    height: 29px;
    flex: none;
    display: flex;
    align-items: center;
    background: linear-gradient(90deg, #e6edf5 0%, #d6e1ec 30%, #c6d6e7 60%, #c5d5e6 100%);
}

.tool-strip {
    margin-left: -2px;
}

.quick-access {
    width: 127px;
    height: 20px;
    margin-left: 12px;
    padding-left: 3px;
    line-height: 19px;
    background: #f6f8fb;
    color: #6b7680;
}

.persp {
    margin-left: 7px;
    align-self: stretch;
    flex: 1;
    display: flex;
    align-items: center;
    padding-left: 12px;
    background: #e8ecf6;
    border-left: 2px solid #b4bec8;
    color: #46525e;
}

.persp-sep {
    width: 1px;
    height: 16px;
    background: #9aa7b4;
    margin: 0 4px 0 6px;
}

.persp-btn {
    display: flex;
    align-items: center;
    gap: 3px;
}

.persp-btn.active {
    height: 19px;
    width: 50px;
    margin-right: 2px;
    padding-left: 1px;
    border: 1px solid #59636e;
    border-radius: 3px;
    background: #dfe5ee;
}

/* main area */
.workbench {
    height: 614px;
    flex: none;
    display: flex;
    padding: 5px 3px 0 6px;
}

.explorer {
    width: 86px;
    height: 607px;
    background: #fff;
    border-radius: 7px;
    display: flex;
    flex-direction: column;
    padding: 0 7px 5px 6px;
}

.explorer-tools {
    height: 24px;
    flex: none;
    display: flex;
    align-items: center;
    gap: 10px;
    padding-left: 2px;
}

.overflow {
    width: 21px;
    font-size: 11px;
    line-height: 11px;
    color: #26303a;
}

.overflow sub {
    font-size: 9px;
    vertical-align: -5px;
    line-height: 0;
}

.explorer-actions {
    height: 26px;
    flex: none;
    display: flex;
    align-items: center;
    gap: 4px;
    padding-left: 4px;
}

.vsep {
    width: 1px;
    height: 16px;
    background: #8a96a2;
    margin: 0 4px 0 2px;
}

.explorer-menu {
    height: 12px;
    flex: none;
    padding: 3px 0 0 8px;
}

.down-tri {
    display: block;
    width: 0;
    height: 0;
    border-left: 5px solid transparent;
    border-right: 5px solid transparent;
    border-top: 6px solid #aab5c0;
}

.explorer-body {
    flex: 1;
    min-height: 0;
    display: flex;
    overflow: hidden;
    padding-top: 9px;
}

.tree {
    width: 61px;
    margin-left: -3px;
    flex: none;
    overflow: hidden;
    white-space: nowrap;
}

.tree li {
    height: 16.900px;
    line-height: 16.900px;
    display: flex;
    align-items: center;
}

.tree li > svg:first-child {
    margin-right: -1px;
}

.lvl-src {
    padding-left: 10px;
}

.tree .lvl-src svg:first-child {
    margin-right: 1px;
}

.lvl-pkg {
    padding-left: 16px;
    gap: 4px;
}

.lvl-pkg span {
    margin-right: 3px;
}

.lvl-open {
    padding-left: 15px;
}

.lvl-file {
    padding-left: 34px;
    gap: 5px;
}

.closed {
    width: 0;
    height: 0;
    flex: none;
    position: relative;
    border-left: 6px solid #9aa7b4;
    border-top: 5px solid transparent;
    border-bottom: 5px solid transparent;
}

.closed::after {
    content: "";
    position: absolute;
    left: -5px;
    top: -3px;
    border-left: 3px solid #fff;
    border-top: 3px solid transparent;
    border-bottom: 3px solid transparent;
}

.open {
    width: 0;
    height: 0;
    flex: none;
    border-right: 6px solid #333d47;
    border-top: 6px solid transparent;
}

.tree-vscroll {
    width: 15px;
    display: flex;
    flex-direction: column;
    background: #f0f1f3;
}

.tree-track {
    height: 470px;
    flex: none;
    text-align: center;
    background: #bcbfc3;
    padding-top: 366px;
    font-size: 14px;
    line-height: 14px;
    color: #4e5860;
}

.tree-vscroll .down-small {
    margin: 33px auto 0;
}

.down-small {
    display: block;
    width: 0;
    height: 0;
    border-left: 4px solid transparent;
    border-right: 4px solid transparent;
    border-top: 4px solid #56626e;
}

.up-small {
    display: block;
    width: 0;
    height: 0;
    border-left: 4px solid transparent;
    border-right: 4px solid transparent;
    border-bottom: 4px solid #8a949e;
}

.left-small {
    display: block;
    width: 0;
    height: 0;
    border-top: 4px solid transparent;
    border-bottom: 4px solid transparent;
    border-right: 4px solid #4a555f;
}

.right-small {
    display: block;
    width: 0;
    height: 0;
    border-top: 4px solid transparent;
    border-bottom: 4px solid transparent;
    border-left: 4px solid #4a555f;
}

.tree-hscroll {
    height: 18px;
    flex: none;
    display: flex;
    align-items: center;
    background: #f0f1f3;
    padding-left: 6px;
}

.tree-hscroll .thumb {
    width: 14px;
    height: 16px;
    margin: 0 15px 0 8px;
    background: linear-gradient(#f2f3f5, #d4d7db);
    border: 1px solid #b0b5ba;
    border-radius: 2px;
}

.center {
    width: 816px;
    flex: none;
    margin-left: 10px;
    display: flex;
    flex-direction: column;
    gap: 10px;
}

.editor {
    height: 484px;
    flex: none;
    background: #fff;
    border-radius: 7px;
    display: flex;
    flex-direction: column;
}

.editor-tabs {
    height: 25px;
    flex: none;
    display: flex;
    justify-content: space-between;
    background: #d9e2ee;
    border-radius: 7px 7px 0 0;
}

.tab {
    width: 181px;
    display: flex;
    align-items: center;
    gap: 2px;
    padding-left: 4px;
    background: #fff;
    border-radius: 6px 6px 0 0;
    color: #3a444e;
}

.tab-close {
    font-size: 11px;
    color: #8a949e;
    margin-left: 6px;
}

.view-tools {
    display: flex;
    gap: 10px;
    align-items: center;
    padding-right: 12px;
}

.designer {
    height: 429px;
    flex: none;
    margin: 3px 5px 0 6px;
    display: flex;
    border-right: 2px solid #b4b8bc;
    border-bottom: 2px solid #9aa0a6;
}

.structure {
    width: 189px;
    display: flex;
    flex-direction: column;
    border-right: 1px solid #8f969d;
    flex: none;
}

.flyout-head {
    height: 18px;
    flex: none;
    display: flex;
    align-items: center;
    gap: 5px;
    padding-left: 6px;
    font-size: 11px;
    color: #1c242c;
}

.flyout-head b {
    font-weight: 600;
}

.lines {
    width: 26px;
    height: 4px;
    border-top: 1px solid #6f7983;
    border-bottom: 1px solid #6f7983;
}

.left-tri {
    width: 0;
    height: 0;
    margin-right: 6px;
    border-top: 3px solid transparent;
    border-bottom: 3px solid transparent;
    border-right: 4px solid #222;
}

.comp-box {
    flex: 1;
    margin: 0 3px 3px 0;
    display: flex;
    flex-direction: column;
    border: 1px solid #b4bac0;
    border-bottom: 1px solid #9aa0a6;
}

.comp-head {
    height: 19px;
    flex: none;
    display: flex;
    align-items: center;
    gap: 5px;
    padding: 0 3px 0 1px;
    border-bottom: 1px solid #aab0b6;
    font-size: 10.8px;
}

.comp-head span {
    flex: 1;
}

.comp-head svg:last-child {
    margin-left: 1px;
}

.comp-tree {
    height: 150px;
    flex: none;
    padding: 3px 0 0 24px;
}

.comp-root {
    display: block;
    width: 12px;
    height: 5px;
    background: #51606e;
}

.prop-grid {
    flex: 1;
    display: flex;
}

.prop-cols {
    flex: 1;
    display: flex;
}

.prop-cols i {
    width: 72px;
    border-right: 1px solid #bfc4c9;
}

.prop-scroll {
    width: 17px;
    background: #eff0f2;
    display: flex;
    align-items: flex-end;
    justify-content: center;
    padding-bottom: 6px;
}

.design-main {
    flex: 1;
    min-width: 0;
    display: flex;
    flex-direction: column;
}

.design-tools {
    height: 30px;
    flex: none;
    display: flex;
    align-items: center;
    padding-left: 1px;
    gap: 3px;
    border-bottom: 1px solid #9aa0a6;
}

.lnf {
    color: #3a444e;
}

.down-solid {
    margin-left: 13px;
    width: 0;
    height: 0;
    border-left: 4px solid transparent;
    border-right: 4px solid transparent;
    border-top: 4px solid #222;
}

.down-solid.small {
    margin-left: 0;
}

.design-row {
    flex: 1;
    min-height: 0;
    display: flex;
}

.palette {
    width: 141px;
    flex: none;
    display: flex;
    flex-direction: column;
    border-right: 1px solid #8f969d;
}

.palette-head {
    height: 14px;
    padding-left: 6px;
    background: #f1f2f4;
    border-bottom: 1px solid #c3c8cd;
}

.palette-body {
    flex: 1;
    min-height: 0;
    display: flex;
    justify-content: space-between;
    background: #f4f4f5;
    padding-right: 3px;
}

.palette-items {
    width: 120px;
    padding: 275px 0 0 4px;
    display: grid;
    grid-template-columns: 60px 60px;
    grid-auto-rows: 20.700px;
    align-content: start;
}

.pal {
    display: flex;
    align-items: center;
    gap: 0;
    font-size: 10.8px;
    white-space: nowrap;
    color: #3a444e;
}

.pal-scroll {
    width: 15px;
    background: #eeeeef;
    display: flex;
    flex-direction: column;
    align-items: center;
    justify-content: space-between;
    padding: 270px 0 7px;
}

.pal-thumb {
    width: 13px;
    height: 27px;
    background: #eceded;
    border: 1px solid #a4a9ae;
}

.canvas-gutter {
    width: 15px;
    flex: none;
    border-right: 1px solid #b4b9be;
}

.canvas {
    flex: 1;
    min-width: 0;
    padding: 34px 18px 0 18px;
    display: flex;
    flex-direction: column;
}

.frame {
    height: 281px;
    flex: none;
    padding: 10px 12px 12px 12px;
    background: linear-gradient(180deg, #c2c6cb 0, #dde3ec 24px, #e9edf5 100%);
    border-right: 1px solid #878d93;
    border-bottom: 1px solid #878d93;
}

.frame-title {
    height: 15px;
    display: flex;
    justify-content: flex-end;
    gap: 3px;
    margin-right: -4px;
}

.frame-btn {
    width: 28px;
    display: flex;
    align-items: center;
    justify-content: center;
    background: #dfe3e8;
    border: 1px solid #a0a7ae;
    border-radius: 2px;
    font-size: 11px;
    font-weight: bold;
    color: #8a949e;
}

.frame-btn i {
    width: 10px;
    height: 5px;
    margin-top: 3px;
    border: 1px solid #59646f;
}

.frame-btn.square i {
    width: 12px;
    height: 9px;
    margin-top: 0;
    border: 3px double #59646f;
}

.frame-top {
    height: 19px;
    margin-top: 9px;
    border: 1px solid #70777e;
    border-radius: 2px;
    background: linear-gradient(180deg, #f4f4f5, #e9e9ea 55%, #c9cacb 60%, #d8d8d9);
}

.frame-mid {
    height: 212px;
    margin-top: 2px;
    border: 1px solid #70777e;
    border-radius: 2px;
    background: linear-gradient(180deg, #fbfbfb, #f0f0f0 46%, #d9d9d9 47%, #d2d2d2);
}

.version {
    margin-top: auto;
    margin-right: -15px;
    padding-bottom: 1px;
    text-align: right;
    font-size: 10px;
    color: #c0c5ca;
}

.editor-foot {
    flex: 1;
    display: flex;
    padding-left: 7px;
}

.foot-tab {
    display: flex;
    align-items: center;
    gap: 2px;
    padding: 0 5px 0 3px;
    height: 21px;
}

.foot-tab.current {
    padding-right: 3px;
    background: #d7dce2;
    border-radius: 0 0 4px 4px;
    color: #4a5662;
}

.console {
    height: 113px;
    flex: none;
    background: #fff;
    border-radius: 7px;
    display: flex;
    flex-direction: column;
}

.console-tabs {
    height: 25px;
    flex: none;
    display: flex;
    align-items: center;
    padding-left: 6px;
}

.ctab {
    display: flex;
    align-items: center;
    gap: 2px;
    height: 23px;
    padding-right: 6px;
}

.ctab.dim {
    color: #a5adb5;
}

.ctab.dim:last-of-type {
    gap: 3px;
}

.ctab.current {
    width: 87px;
    gap: 3px;
    padding-left: 2px;
    background: #e9edf3;
    border-radius: 5px 5px 0 0;
    color: #3a444e;
    margin-right: 2px;
}

.ctab.current .tab-close {
    margin-left: 7px;
}

.console-strip {
    margin-left: auto;
    margin-right: 9px;
}

.console-max {
    margin-right: 12px;
}

.console-label {
    height: 16px;
    flex: none;
    line-height: 15px;
    padding-left: 5px;
    margin-right: 5px;
    border-bottom: 1px solid #4f5860;
    font-size: 10.7px;
    color: #333d47;
    white-space: nowrap;
}

.console-out {
    flex: 1;
    display: flex;
    margin: 0 5px 0 6px;
    min-height: 0;
}

.console-text {
    flex: 1;
}

.console-vscroll {
    width: 14px;
    background: #eff0f2;
    display: flex;
    flex-direction: column;
    align-items: center;
    justify-content: space-between;
    padding: 8px 0;
}

.console-hscroll {
    height: 15px;
    flex: none;
    margin: 0 5px 6px 6px;
    background: #efeff0;
    display: flex;
    align-items: center;
    justify-content: space-between;
    padding: 0 22px 0 6px;
}

.trim {
    margin: 1px 0 0 5px;
    width: 29px;
    display: flex;
    flex-direction: column;
    gap: 2px;
}

.trim-group {
    height: 52px;
    background: #eef2f9;
    border-radius: 6px;
    border: 1px solid #f7f9fc;
    display: flex;
    flex-direction: column;
    align-items: center;
    gap: 6px;
    padding-top: 4px;
}

.trim-group.first {
    height: 54px;
}

.trim-dots {
    width: 16px;
    height: 1px;
    flex: none;
    border-top: 1px dotted #8a96a2;
}

.statusbar {
    flex: 1;
    display: flex;
    align-items: center;
    color: #3a444e;
    padding-left: 274px;
}

.st-cell {
    display: flex;
    align-items: center;
    height: 18px;
    padding-left: 6px;
    border-left: 1px solid #aab4be;
}

.writable {
    width: 97px;
}

.insert {
    width: 92px;
}

.pos {
    width: 89px;
}

.heap {
    width: 124px;
    height: 19px;
    margin-top: 3px;
    background: #fbfcfd;
    border: 1px solid #6b7480;
    border-width: 0 1px;
    display: flex;
    color: #222;
    position: relative;
}

.heap-used {
    width: 95px;
    background: linear-gradient(180deg, #fffff0, #fdfbe6);
    border-right: 1px solid #4f5860;
}

.heap-text {
    position: absolute;
    left: 26px;
    top: 0;
    line-height: 17px;
}

.gc {
    margin: 2px 0 0 -1px;
}

.window-foot {
    height: 5px;
    flex: none;
    margin: 0 -2px;
    background: linear-gradient(90deg, #7fd6f0, #4bb2e4 40%, #2a8ad0 100%);
}

/* floating swing window */
.app-frame {
    position: absolute;
    left: 237px;
    top: 154px;
    width: 715px;
    height: 281px;
    padding: 0 4px 6px 5px;
    border-radius: 6px 6px 4px 4px;
    background: linear-gradient(180deg, #d3e0ed, #c6d6e6 60%, #b6cbdf);
    border: 1px solid #5d6e7c;
    box-shadow: 3px 3px 12px 3px rgba(30, 36, 44, .75);
    display: flex;
    flex-direction: column;
}

.app-title {
    height: 26px;
    flex: none;
    display: flex;
    align-items: center;
    margin: 0 -4px 0 -5px;
    padding-left: 7px;
    background: linear-gradient(180deg, rgba(255, 255, 255, .15), rgba(255, 255, 255, 0) 50%, rgba(90, 110, 130, .4)), linear-gradient(90deg, #d2e3f3, #bfd8f0 25%, #b6d3f0 45%, #cbdff1 75%, #b8d5ee);
    position: relative;
}

.blur-a,
.blur-b,
.blur-c,
.blur-d,
.blur-e {
    position: absolute;
    background: #6e7f8e;
    filter: blur(2px);
    opacity: .35;
}

.blur-a {
    left: 245px;
    top: 6px;
    width: 38px;
    height: 5px;
    background: #4e5a66;
    opacity: .8;
}

.blur-b {
    left: 78px;
    top: 0;
    width: 97px;
    height: 4px;
}

.blur-c {
    left: 100px;
    top: 18px;
    width: 56px;
    height: 4px;
}

.blur-d {
    left: 395px;
    top: 18px;
    width: 90px;
    height: 4px;
}

.blur-e {
    left: 229px;
    top: 4px;
    width: 10px;
    height: 9px;
    background: #b09a98;
    opacity: .8;
}

.app-caption {
    margin-left: auto;
    margin-right: 4px;
    align-self: flex-start;
    display: flex;
    height: 17px;
    border-radius: 0 0 4px 4px;
    background: linear-gradient(180deg, #d3dbe3, #a8b6c4);
    border: 1px solid #6e7f8e;
    border-top: 0;
}

.ac-btn {
    width: 26px;
    display: flex;
    align-items: center;
    justify-content: center;
    border-right: 1px solid #7f8e9c;
}

.ac-btn i {
    width: 10px;
    height: 4px;
    margin-top: 5px;
    border: 1px solid #556472;
}

.ac-btn.square i {
    width: 10px;
    height: 9px;
    margin-top: 0;
    border: 2px solid #fff;
    outline: 1px solid #556472;
    outline-offset: -1px;
}

.ac-btn.close {
    width: 44px;
    border-right: 0;
    border-radius: 0 0 3px 0;
    background: linear-gradient(180deg, #d98f86, #c24a40 55%, #cf6a5e);
    color: #fff;
    font-size: 13px;
    font-weight: bold;
}

.app-content {
    flex: 1;
    min-height: 0;
    display: flex;
    border: 1px solid #6a7884;
    border-bottom-color: #a9b8c6;
    padding: 5px 5px 4px;
    background: #e6eef6;
    font-family: 'Liberation Sans', Arial, sans-serif;
    font-size: 11px;
    font-weight: bold;
    color: #3a4148;
}

.app-inner {
    flex: 1;
    min-width: 0;
    display: flex;
    flex-direction: column;
    border: 1px solid #8b98a4;
}

.app-north {
    height: 24px;
    flex: none;
    display: flex;
    align-items: center;
    justify-content: center;
    background: linear-gradient(180deg, #fbfcfc, #eff3f6 40%, #d2dbe4);
    border-bottom: 2px solid #5e6f7d;
}

.focus-label {
    height: 17px;
    line-height: 16px;
    padding: 0 1px;
    background: #e4eaef;
    outline: 1px solid #c8d1d9;
}

.app-row {
    flex: 1;
    min-height: 0;
    display: flex;
}

.app-west,
.app-center {
    display: flex;
    align-items: center;
    justify-content: center;
    background: linear-gradient(180deg, #dce7f1 0%, #eef3f8 22%, #f9fbfc 40%, #e6edf4 62%, #d6e0eb 82%, #c3d2e1 100%);
}

.app-west {
    width: 76px;
    flex: none;
    border-right: 2px solid #5e6f7d;
}

.app-center {
    flex: 1;
}

.resize-cursor {
    position: absolute;
    left: 228px;
    top: 279px;
}
```
